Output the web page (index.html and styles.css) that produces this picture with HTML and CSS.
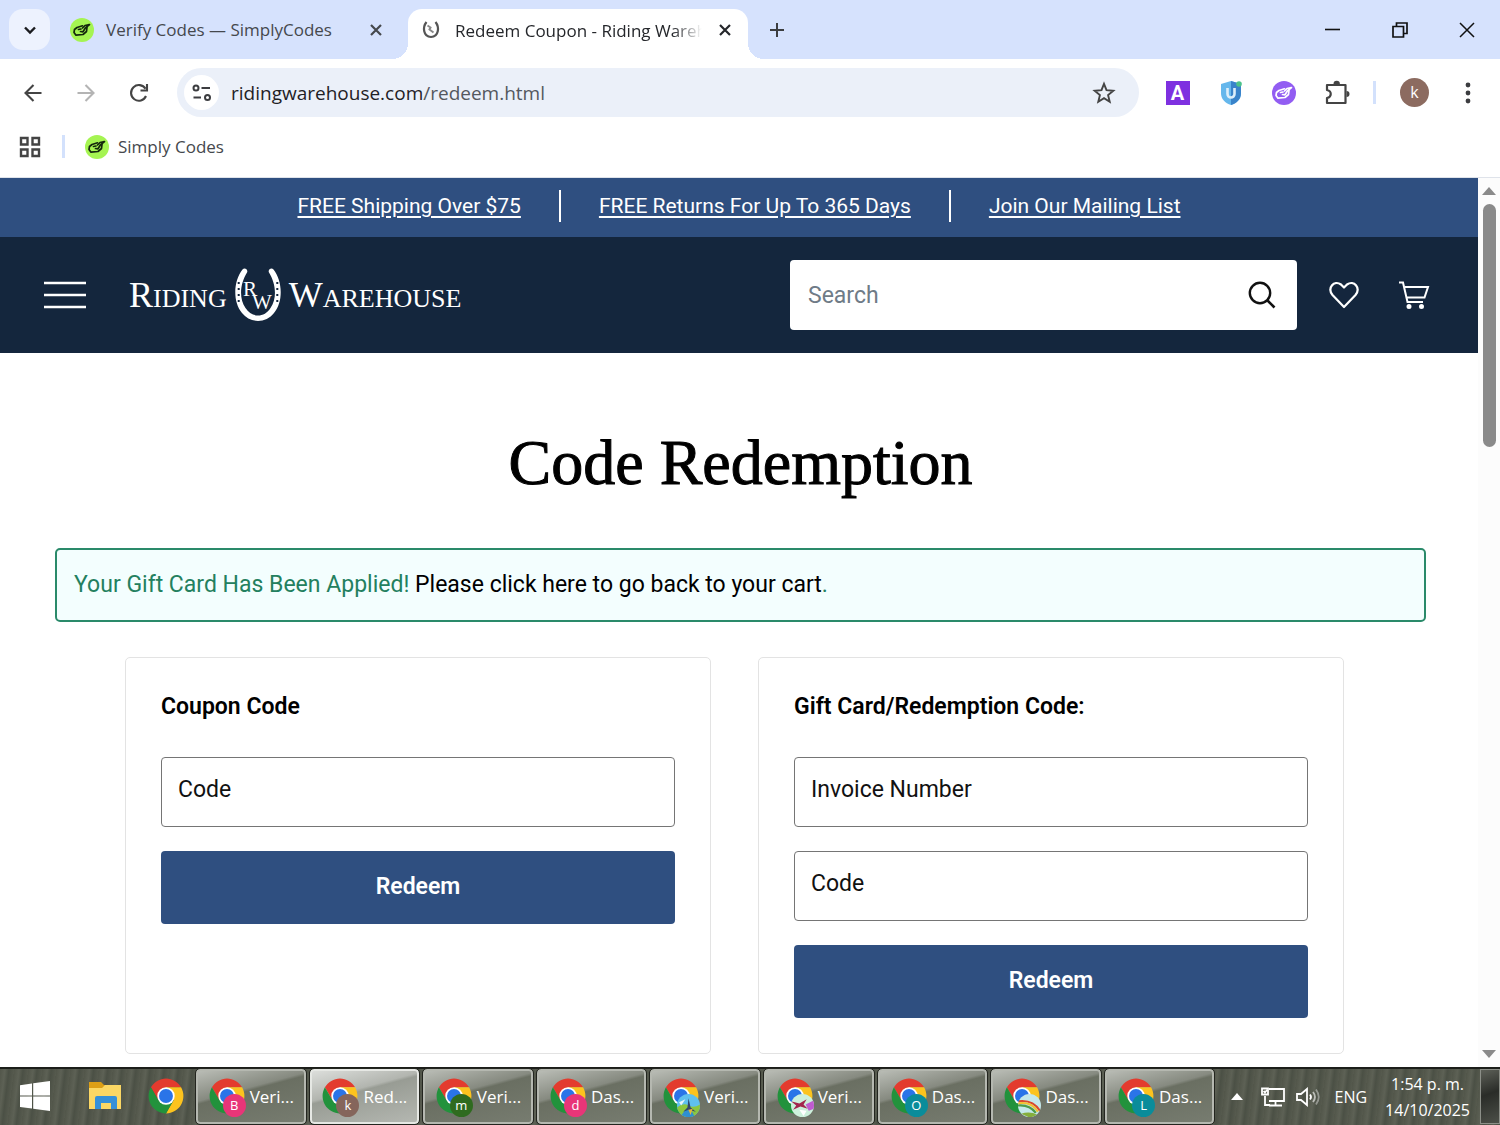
FILE: index.html
```html
<!DOCTYPE html>
<html lang="en">
<head>
    <meta charset="UTF-8">
    <meta name="viewport" content="width=device-width, initial-scale=1.0">
    <title>Redeem Coupon - Riding Warehouse</title>
    <link rel="stylesheet" href="styles.css">
</head>
<body>
    <svg class="sprite" aria-hidden="true">
        <symbol id="chrome" viewBox="0 0 48 48">
            <path fill="#e33b2e" d="M4.95 13A22 22 0 0 1 43.05 13H24L14.47 29.5z"/>
            <path fill="#fcc31e" d="M43.05 13A22 22 0 0 1 24 46L33.53 29.5 24 13z"/>
            <path fill="#22923c" d="M24 46A22 22 0 0 1 4.95 13L14.47 29.5H33.53z"/>
            <circle cx="24" cy="24" r="11" fill="#fff"/>
            <circle cx="24" cy="24" r="8.8" fill="#2a74e8"/>
        </symbol>
        <symbol id="tag" viewBox="0 0 24 24">
            <g fill="none" stroke="currentColor" stroke-width="1.7" stroke-linejoin="round" stroke-linecap="round">
                <path d="M12.500 7.800L7 9.500 4.500 11.500 4 14.500l2 2.700 7-.7 3.500-3 .5-4"/>
                <path d="M8.500 11.500l2.500-.5M10.500 13.500l2.500.3 2.500-4 4-3.300-4.500 1-2.500 2.500"/>
            </g>
        </symbol>
        <symbol id="cross" viewBox="0 0 14 14">
            <path d="M2 2l10 10M12 2L2 12" fill="none" stroke="currentColor" stroke-width="2.200"/>
        </symbol>
    </svg>

    <div class="tabstrip">
        <button class="tab-search" aria-label="Search tabs">
            <svg width="14" height="14" viewBox="0 0 14 14"><path d="M2 4.500l5 5 5-5" fill="none" stroke="#1b1c1f" stroke-width="2.400"/></svg>
        </button>
        <div class="tab">
            <span class="codes-icon"><svg><use href="#tag"/></svg></span>
            <span class="tab-title">Verify Codes — SimplyCodes</span>
            <button class="tab-close" aria-label="Close tab"><svg><use href="#cross"/></svg></button>
        </div>
        <div class="tab active">
            <svg class="shoe-icon" viewBox="0 0 18 20">
                <path d="M4.500 2C.5 7 1 16.500 9 17 17 16.500 17.500 7 13.500 2" fill="none" stroke="#555" stroke-width="2.200"/>
                <path d="M5.500 5.500l3 2-1 2 4 3" fill="none" stroke="#888" stroke-width="2"/>
            </svg>
            <span class="tab-title">Redeem Coupon - Riding Wareh</span>
            <button class="tab-close" aria-label="Close tab"><svg><use href="#cross"/></svg></button>
        </div>
        <button class="new-tab" aria-label="New tab">
            <svg width="16" height="16" viewBox="0 0 16 16"><path d="M8 1v14M1 8h14" stroke="#3c3d40" stroke-width="2"/></svg>
        </button>
        <div class="window-buttons">
            <button aria-label="Minimize"><svg width="16" height="16" viewBox="0 0 16 16"><path d="M0 7.500h15" stroke="#111" stroke-width="1.600"/></svg></button>
            <button aria-label="Restore"><svg width="16" height="16" viewBox="0 0 16 16"><path d="M1 4.500h10.500V15H1zM4.500 4V1H15v10.500h-3" fill="none" stroke="#111" stroke-width="1.700"/></svg></button>
            <button aria-label="Close"><svg width="16" height="16" viewBox="0 0 16 16"><path d="M1 1l14 14M15 1L1 15" stroke="#111" stroke-width="1.500"/></svg></button>
        </div>
    </div>

    <div class="toolbar">
        <button aria-label="Back"><svg width="20" height="20" viewBox="0 0 20 20"><path d="M18.500 10H3M10.500 2L2.500 10l8 8" fill="none" stroke="#444" stroke-width="2.100"/></svg></button>
        <button aria-label="Forward"><svg width="20" height="20" viewBox="0 0 20 20"><path d="M1.500 10H17M9.500 2l8 8-8 8" fill="none" stroke="#b4b4b4" stroke-width="2.100"/></svg></button>
        <button aria-label="Reload"><svg width="20" height="20" viewBox="0 0 20 20"><path d="M17 13A7.800 7.800 0 1 1 16.500 5.800M18 1v6.500h-6.500" fill="none" stroke="#444" stroke-width="2.100"/></svg></button>
        <div class="omnibox">
            <button class="site-info" aria-label="Site information">
                <svg width="20" height="18" viewBox="0 0 20 18" fill="none" stroke="#3c3d40" stroke-width="2"><circle cx="4" cy="4" r="2.500"/><path d="M9.500 4H18M1.500 13.500H9"/><circle cx="15.500" cy="13.500" r="2.500"/></svg>
            </button>
            <a class="url" href="#">ridingwarehouse.com<span>/redeem.html</span></a>
            <button class="star" aria-label="Bookmark this tab">
                <svg width="24" height="24" viewBox="0 0 24 24"><path d="M12 2.800l2.500 6.400 6.800.5-5.200 4.400 1.600 6.700L12 17.200l-5.700 3.600 1.600-6.700-5.200-4.400 6.800-.5z" fill="none" stroke="#444" stroke-width="1.900"/></svg>
            </button>
        </div>
        <button aria-label="Extension A"><span class="ext-a">A</span></button>
        <button aria-label="Shield extension">
            <svg width="24" height="26" viewBox="0 0 24 26">
                <path d="M12 1l10 3v9c0 6-4 10-10 12C6 23 2 19 2 13V4z" fill="#65b7ec"/>
                <path d="M12 1l10 3v9c0 6-4 10-10 12z" fill="#3983ca"/>
                <path d="M8.500 8v6a3.500 3.500 0 0 0 7 0V8" fill="none" stroke="#dceefa" stroke-width="2.600"/>
                <circle cx="20" cy="4" r="2.800" fill="#4cc38a"/>
            </svg>
        </button>
        <button aria-label="SimplyCodes extension"><span class="codes-icon purple"><svg><use href="#tag"/></svg></span></button>
        <button aria-label="Extensions">
            <svg width="26" height="26" viewBox="0 0 26 26"><path d="M3 5h18.500v18H3v-5c5-1 5-7 0-8z" fill="none" stroke="#444" stroke-width="2.200" stroke-linejoin="round"/><path d="M9.500 4a3.200 3.200 0 0 1 6.400 0zM22.500 11a3 3 0 0 1 0 6z" fill="#444"/></svg>
        </button>
        <span class="divider"></span>
        <button aria-label="Profile"><span class="profile">k</span></button>
        <button aria-label="Menu"><svg width="6" height="22" viewBox="0 0 6 22" fill="#3c3d40"><circle cx="3" cy="3" r="2.400"/><circle cx="3" cy="11" r="2.400"/><circle cx="3" cy="19" r="2.400"/></svg></button>
    </div>

    <div class="bookmarks">
        <button aria-label="Apps">
            <svg width="22" height="22" viewBox="0 0 22 22" fill="none" stroke="#444" stroke-width="2.400"><path d="M2 2h6.500v6.500H2zM13.500 2H20v6.500h-6.500zM2 13.500h6.500V20H2zM13.500 13.500H20V20h-6.500z"/></svg>
        </button>
        <span class="divider"></span>
        <a href="#"><span class="codes-icon"><svg><use href="#tag"/></svg></span>Simply Codes</a>
    </div>

    <div class="viewport">
        <div class="page">
            <div class="promo">
                <a href="#">FREE Shipping Over $75</a>
                <span></span>
                <a href="#">FREE Returns For Up To 365 Days</a>
                <span></span>
                <a href="#">Join Our Mailing List</a>
            </div>

            <header class="site-header">
                <button class="menu" aria-label="Menu">
                    <svg width="42" height="28" viewBox="0 0 42 28"><path d="M0 2h42M0 14h42M0 26h42" stroke="#fff" stroke-width="2.400"/></svg>
                </button>
                <a class="logo" href="#">
                    <span>R<small>IDING</small></span>
                    <svg width="46" height="54" viewBox="0 0 46 54">
                        <path d="M7.500 1.500C-1 12-3 33 7 45c8 10.500 24 10.500 32 0C49 33 47 12 38.500 1.500c-2-2.500-6 0-4.500 3C40 14 43 29 35.500 40c-6 10-19 10-25 0C3 29 6 14 12 4.500c1.500-3-2.500-5.500-4.500-3z" fill="#fff"/>
                        <path d="M3.700 14v20M42.300 14v20" stroke="#14263d" stroke-width="2" stroke-dasharray="2 4"/>
                        <text x="8" y="28" class="mono">R</text>
                        <text x="17" y="41" class="mono">W</text>
                    </svg>
                    <span>W<small>AREHOUSE</small></span>
                </a>
                <form class="search">
                    <input type="text" placeholder="Search" aria-label="Search">
                    <button type="button" aria-label="Search">
                        <svg width="28" height="28" viewBox="0 0 28 28"><circle cx="12" cy="12" r="10.200" fill="none" stroke="#111" stroke-width="2.400"/><path d="M19.500 19.500l7 7" stroke="#111" stroke-width="2.600"/></svg>
                    </button>
                </form>
                <a class="header-icon" href="#" aria-label="Wish list">
                    <svg width="30" height="28" viewBox="0 0 30 28"><path d="M15 26L3.500 14C-2 7 5-1.500 12 3.500L15 6.500l3-3C25-1.500 32 7 26.500 14z" fill="none" stroke="#fff" stroke-width="2.200" stroke-linejoin="round"/></svg>
                </a>
                <a class="header-icon" href="#" aria-label="Cart">
                    <svg width="32" height="28" viewBox="0 0 32 28" fill="none" stroke="#fff" stroke-width="2"><path d="M1 1.500h4l4.500 19.500H25M7 6h23l-3.500 10.500H9.200"/><circle cx="11" cy="25.500" r="1.500" fill="#fff"/><circle cx="23.500" cy="25.500" r="1.500" fill="#fff"/></svg>
                </a>
            </header>

            <main>
                <h1>Code Redemption</h1>
                <p class="notice">Your Gift Card Has Been Applied! <a href="#">Please click here to go back to your cart</a>.</p>

                <div class="cards">
                    <form class="card">
                        <h2>Coupon Code</h2>
                        <input type="text" placeholder="Code" aria-label="Coupon code">
                        <button type="button">Redeem</button>
                    </form>
                    <form class="card">
                        <h2>Gift Card/Redemption Code:</h2>
                        <input type="text" placeholder="Invoice Number" aria-label="Invoice number">
                        <input type="text" placeholder="Code" aria-label="Gift card code">
                        <button type="button">Redeem</button>
                    </form>
                </div>
            </main>
        </div>
        <div class="scrollbar">
            <svg width="14" height="8" viewBox="0 0 14 8"><path d="M0 8l7-8 7 8z" fill="#8a8a8a"/></svg>
            <div class="track"><div class="thumb"></div></div>
            <svg width="14" height="8" viewBox="0 0 14 8"><path d="M0 0l7 8 7-8z" fill="#8a8a8a"/></svg>
        </div>
    </div>

    <div class="taskbar">
        <button class="launcher start" aria-label="Start">
            <svg width="30" height="30" viewBox="0 0 30 30" fill="#fff"><path d="M0 4.200l12-1.700v12H0zM13.200 2.300L30 0v14.500H13.200zM0 15.600h12v12L0 25.900zM13.200 15.600H30V30l-16.800-2.300z"/></svg>
        </button>
        <button class="launcher" aria-label="File Explorer">
            <svg width="34" height="30" viewBox="0 0 34 30"><path d="M1 1h12l3 3h17v8H1z" fill="#dd9f16"/><path d="M1 7h13l3-3h16v24H1z" fill="#fbd764"/><path d="M7 28V17q0-2 2-2h18q2 0 2 2v11h-6v-6h-10v6z" fill="#3590d8"/></svg>
        </button>
        <button class="launcher" aria-label="Chrome"><svg width="38" height="38"><use href="#chrome"/></svg></button>

        <div class="windows">
            <button><span class="app"><svg><use href="#chrome"/></svg><b class="badge pink">B</b></span>Veri...</button>
            <button class="current"><span class="app"><svg><use href="#chrome"/></svg><b class="badge brown">k</b></span>Red...</button>
            <button><span class="app"><svg><use href="#chrome"/></svg><b class="badge green">m</b></span>Veri...</button>
            <button><span class="app"><svg><use href="#chrome"/></svg><b class="badge pink">d</b></span>Das...</button>
            <button><span class="app"><svg><use href="#chrome"/></svg>
                <b class="badge sky"><svg viewBox="0 0 22 22"><path d="M0 13q6-5 11-2t11-1v12H0z" fill="#8cc63f"/><path d="M3 22l5-7 6 1 3 6z" fill="#2f8fd0"/><path d="M11 4l2 9 5 4-7-2-5 2 4-4z" fill="#33466b"/><path d="M2 8l6-3-4 6z" fill="#e8f4fb"/><path d="M11 15l4-1-2 6z" fill="#e7b53c"/></svg></b></span>Veri...</button>
            <button><span class="app"><svg><use href="#chrome"/></svg>
                <b class="badge mint"><svg viewBox="0 0 22 22"><path d="M0 7l8 2 7-4-3 5 4 4-7-2-7 3 3-4z" fill="#a3264d"/><path d="M14 10l8-4v8l-5 2z" fill="#c05bd0"/><path d="M8 15l7 1-3 5z" fill="#fff"/></svg></b></span>Veri...</button>
            <button><span class="app"><svg><use href="#chrome"/></svg><b class="badge teal">O</b></span>Das...</button>
            <button><span class="app"><svg><use href="#chrome"/></svg>
                <b class="badge ice"><svg viewBox="0 0 22 22" fill="none"><path d="M0 7q14-2 21 9" stroke="#d9492f" stroke-width="2"/><path d="M0 9q13-2 19 8" stroke="#f2c230" stroke-width="2"/><path d="M0 11q11-1 17 7" stroke="#4d9c4a" stroke-width="2"/><path d="M3 19q8-3 16 1l-7 3z" fill="#86ae3c"/></svg></b></span>Das...</button>
            <button><span class="app"><svg><use href="#chrome"/></svg><b class="badge teal">L</b></span>Das...</button>
        </div>

        <div class="tray">
            <svg width="12" height="7" viewBox="0 0 12 7"><path d="M0 7l6-7 6 7z" fill="#fff"/></svg>
            <svg width="24" height="20" viewBox="0 0 24 20" fill="none" stroke="#fff" stroke-width="1.800"><path d="M8 2h15v12H8M14.500 14v4M8 18.500h13M4 9v9h5M1 1.500h6v6H1zM2.500 4l1.500 1.500 2-2.500"/></svg>
            <svg width="24" height="20" viewBox="0 0 24 20" fill="none" stroke="#fff" stroke-width="1.800"><path d="M1 7h4l6-5v16l-6-5H1zM14 7.500q2 2.500 0 5"/><path d="M17 5q4 5 0 10" opacity=".6"/><path d="M20 2.500q5.500 7.500 0 15" opacity=".4"/></svg>
            <span class="lang">ENG</span>
            <div class="clock">1:54 p. m.<br>14/10/2025</div>
        </div>
        <button class="show-desktop" aria-label="Show desktop"></button>
    </div>
</body>
</html>
```

FILE: styles.css
```css
* {
    box-sizing: border-box;
}
body {
    margin: 0;
    min-height: 100vh;
    display: flex;
    flex-direction: column;
    background-color: #fff;
    color: #000;
    font-family: 'Open Sans', 'Noto Sans', sans-serif;
}
button {
    display: flex;
    align-items: center;
    justify-content: center;
    padding: 0;
    border: none;
    background: none;
    color: inherit;
    font-family: inherit;
    cursor: pointer;
}
a {
    color: inherit;
    text-decoration: none;
}
svg {
    display: block;
    flex-shrink: 0;
}
.sprite {
    position: absolute;
    width: 0;
    height: 0;
}

/* browser window */
.tabstrip {
    display: flex;
    align-items: center;
    height: 59px;
    padding-left: 9px;
    background-color: #d6e2fd;
}
.tab-search {
    width: 41px;
    height: 41px;
    border-radius: 14px;
    background-color: #edf2fe;
}
.tab {
    display: flex;
    align-items: center;
    width: 340px;
    height: 50px;
    padding: 0 16px 8px 20px;
    color: #45484d;
    font-size: 17px;
}
.tab:not(.active) {
    width: 358px;
    padding: 0 25px 0 20px;
    height: 42px;
}
.tab:not(.active) .tab-title {
    margin-left: 12px;
}
.tab.active {
    position: relative;
    align-self: flex-end;
    padding-left: 14px;
    border-radius: 14px 14px 0 0;
    background-color: #fff;
    color: #25272b;
}
.tab.active::before,
.tab.active::after {
    content: '';
    position: absolute;
    bottom: 0;
    width: 16px;
    height: 16px;
}
.tab.active::before {
    right: 100%;
    background: radial-gradient(circle at 0 0, transparent 16px, #fff 16px);
}
.tab.active::after {
    left: 100%;
    background: radial-gradient(circle at 100% 0, transparent 16px, #fff 16px);
}
.tab-title {
    flex: 1;
    min-width: 0;
    white-space: nowrap;
}
.tab.active .tab-title {
    margin-left: 15px;
    margin-right: 16px;
    -webkit-mask-image: linear-gradient(to right, #000 88%, transparent);
    mask-image: linear-gradient(to right, #000 88%, transparent);
}
.tab-close svg {
    width: 14px;
    height: 14px;
}
.shoe-icon {
    width: 18px;
    height: 20px;
}
.codes-icon {
    display: flex;
    flex-shrink: 0;
    width: 24px;
    height: 24px;
    border-radius: 50%;
    background-color: #a5f452;
    color: #14260d;
}
.codes-icon svg {
    width: 24px;
    height: 24px;
}
.purple {
    background-color: #925df2;
    color: #fff;
}
.new-tab {
    width: 40px;
    height: 40px;
    margin-left: 9px;
}
.window-buttons {
    display: flex;
    margin-left: auto;
}
.window-buttons button {
    width: 67px;
    height: 40px;
}
.toolbar {
    display: flex;
    align-items: center;
    height: 67px;
    padding: 0 6px;
}
.toolbar > button {
    width: 53px;
    height: 48px;
}
.omnibox {
    flex: 1;
    display: flex;
    align-items: center;
    height: 49px;
    margin: 0 12px;
    padding: 0 18px 0 7px;
    border-radius: 25px;
    background-color: #ebf0f9;
    font-size: 19px;
}
.site-info {
    width: 35px;
    height: 35px;
    border-radius: 50%;
    background-color: #fff;
}
.url {
    flex: 1;
    margin-left: 12px;
    color: #1f2125;
}
.url span {
    color: #54585e;
}
.star {
    width: 34px;
    height: 34px;
}
.ext-a {
    width: 24px;
    height: 24px;
    background-color: #7e30e0;
    color: #fff;
    font: bold 20px/24px 'Roboto', sans-serif;
}
.divider {
    width: 3px;
    height: 23px;
    background-color: #d3e1fc;
}
.toolbar .divider {
    margin: 0 12px 0 10px;
}
.profile {
    width: 29px;
    height: 29px;
    border-radius: 50%;
    background-color: #8c6b60;
    color: #fff;
    font-size: 16px;
    line-height: 28px;
}
.bookmarks {
    display: flex;
    align-items: center;
    height: 52px;
    padding: 0 19px 10px;
    border-bottom: 1px solid #dfe3ea;
    color: #45484d;
    font-size: 17px;
}
.bookmarks .divider {
    margin: 0 20px 0 21px;
}
.bookmarks a {
    display: flex;
    align-items: center;
    gap: 9px;
}

/* site */
.viewport {
    flex: 1;
    display: flex;
}
.page {
    flex: 1;
    font-family: 'Roboto', sans-serif;
    font-size: 23px;
}
.promo {
    display: flex;
    align-items: center;
    justify-content: center;
    gap: 38px;
    height: 59px;
    padding-bottom: 3px;
    background-color: #2f4f80;
    color: #fff;
    font-size: 21px;
}
.promo a {
    text-decoration: underline;
    text-underline-offset: 3px;
}
.promo span {
    width: 2px;
    height: 32px;
    background-color: #fff;
}
.site-header {
    display: flex;
    align-items: center;
    height: 116px;
    padding: 0 48px 0 44px;
    background-color: #14263d;
    color: #fff;
}
.logo {
    display: flex;
    align-items: center;
    gap: 8px;
    margin-left: 43px;
    font: 36px/40px 'Liberation Serif', serif;
}
.logo > span {
    padding-top: 4px;
}
.logo small {
    font-size: 26px;
}
.mono {
    fill: #fff;
    font: 21px 'Liberation Serif', serif;
}
.search {
    display: flex;
    align-items: center;
    width: 507px;
    height: 70px;
    margin-left: auto;
    padding: 0 21px 0 18px;
    border-radius: 4px;
    background-color: #fff;
}
.search input {
    flex: 1;
    min-width: 0;
    padding: 0;
    border: none;
    outline: none;
    font: 23px 'Roboto', sans-serif;
}
.search input::placeholder {
    color: #6f7b87;
}
.search button {
    color: #111;
}
.header-icon {
    margin-left: 32px;
}
.header-icon + .header-icon {
    margin-left: 39px;
}
main {
    padding: 74px 52px 13px 55px;
}
h1 {
    margin: 0 0 49px;
    font: 64px/72px 'Liberation Serif', serif;
    text-align: center;
    -webkit-text-stroke: 1px #000;
}
.notice {
    margin: 0 0 35px;
    padding: 17px;
    border: 2px solid #2a8a6a;
    border-radius: 5px;
    background-color: #f3fefe;
    color: #23805f;
    line-height: 36px;
}
.notice a {
    color: #000;
}
.cards {
    display: grid;
    grid-template-columns: 1fr 1fr;
    gap: 47px;
    padding: 0 82px 0 70px;
}
.card {
    display: flex;
    flex-direction: column;
    gap: 24px;
    padding: 35px;
    border: 1px solid #e3e3e3;
    border-radius: 5px;
}
.card h2 {
    margin: 0 0 12px;
    font-size: 23px;
    font-weight: 600;
    line-height: 28px;
}
.card input {
    width: 100%;
    height: 70px;
    padding: 0 16px 5px;
    border: 1px solid #757575;
    border-radius: 4px;
    font: 23px 'Roboto', sans-serif;
}
.card input::placeholder {
    color: #111;
}
.card button {
    height: 73px;
    padding-bottom: 3px;
    border-radius: 4px;
    background-color: #2f4f80;
    color: #fff;
    font-size: 23px;
    font-weight: 600;
}
.scrollbar {
    display: flex;
    flex-direction: column;
    align-items: center;
    width: 22px;
    padding: 9px 0;
    background-color: #fcfcfc;
}
.track {
    flex: 1;
    padding: 9px 0;
}
.thumb {
    width: 13px;
    height: 29%;
    border-radius: 7px;
    background-color: #8a8a8a;
}

/* taskbar */
.taskbar {
    display: flex;
    align-items: center;
    height: 58px;
    padding-bottom: 1px;
    border-top: 2px solid #1c1e1a;
    background: repeating-linear-gradient(97deg, #52564a 0, #5d6155 5px, #4b5045 9px, #565a4e 14px);
    color: #fff;
    font-size: 16px;
}
.launcher {
    width: 61px;
    height: 55px;
    padding-bottom: 1px;
}
.start {
    width: 74px;
    padding-right: 4px;
}
.windows {
    flex: 1;
    display: flex;
    gap: 4px;
    height: 55px;
}
.windows button {
    flex: 1;
    gap: 4px;
    border: 2px solid #b5b8b0;
    border-radius: 4px;
    outline: 1px solid #23251f;
    background: linear-gradient(165deg, #b9bcb5 0, #868a80 38%, #6a6f62 42%, #777c70 100%);
    font-size: 17px;
}
.windows .current {
    border-color: #e6e8e4;
    background: linear-gradient(165deg, #dcdedb 0, #b2b5af 38%, #989c94 42%, #b4b7b1 100%);
}
.app {
    position: relative;
    width: 38px;
    height: 40px;
}
.app > svg {
    width: 38px;
    height: 38px;
}
.badge {
    position: absolute;
    right: 0;
    bottom: 0;
    width: 23px;
    height: 23px;
    border-radius: 50%;
    overflow: hidden;
    font-size: 13px;
    font-weight: 400;
    line-height: 22px;
    text-align: center;
}
.pink { background-color: #e83578; }
.brown { background-color: #85655b; }
.green { background-color: #2f6b1f; }
.teal { background-color: #0a8c9a; }
.sky { background-color: #5fc0ee; }
.mint { background-color: #cdf0dc; }
.ice { background-color: #c4e8ea; }
.tray {
    display: flex;
    align-items: center;
    margin-left: 16px;
}
.tray svg + svg {
    margin-left: 18px;
}
.tray svg + svg + svg {
    margin-left: 11px;
}
.lang {
    margin-left: 15px;
}
.clock {
    margin: 0 10px 0 18px;
    line-height: 26px;
    text-align: center;
}
.show-desktop {
    width: 20px;
    height: 55px;
    border: 1px solid #8c8f88;
    background: linear-gradient(160deg, #5d6058 0, #2a2c28 45%, #4c4f48 100%);
}
```
